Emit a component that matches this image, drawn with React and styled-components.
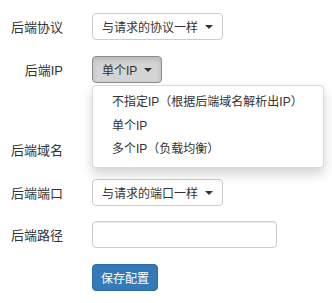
import React from "react";
import styled, { createGlobalStyle } from "styled-components";

const GlobalStyle = createGlobalStyle`
    html, body {
        margin: 0;
        padding: 0;
        background: #ffffff;
    }
    body {
        font-family: "Liberation Sans", "Noto Sans CJK SC", sans-serif;
        color: #333333;
    }
`

const FONT = `"Liberation Sans", "Noto Sans CJK SC", sans-serif`;

export default function App() {
    return (
        <>
            <GlobalStyle />
            <Form>
                <Row $space={16}>
                    <Label>后端协议</Label>
                    <SelectButton $width={131}>
                        <span>与请求的协议一样</span>
                        <Caret />
                    </SelectButton>
                </Row>

                <Row $space={53}>
                    <Label>后端IP</Label>
                    <Holder>
                        <SelectButton $width={70} $active>
                            <span>单个IP</span>
                            <Caret />
                        </SelectButton>
                        <Menu>
                            <MenuItem>不指定IP（根据后端域名解析出IP）</MenuItem>
                            <MenuItem>单个IP</MenuItem>
                            <MenuItem>多个IP（负载均衡）</MenuItem>
                        </Menu>
                    </Holder>
                </Row>

                <Row $space={16}>
                    <Label>后端域名</Label>
                    <TextInput $width={185} />
                </Row>

                <Row $space={15}>
                    <Label>后端端口</Label>
                    <SelectButton $width={131}>
                        <span>与请求的端口一样</span>
                        <Caret />
                    </SelectButton>
                </Row>

                <Row $space={16}>
                    <Label>后端路径</Label>
                    <TextInput $width={185} />
                </Row>

                <Row $space={0}>
                    <Label />
                    <PrimaryButton>保存配置</PrimaryButton>
                </Row>
            </Form>
        </>
    )
}

const Form = styled.form`
    display: flex;
    flex-direction: column;
    padding-top: 13px;
    font-family: ${FONT};
`

const Row = styled.div`
    display: flex;
    align-items: center;
    height: 27px;
    margin-bottom: ${p => p.$space}px;
`

const Label = styled.label`
    width: 63px;
    flex-shrink: 0;
    text-align: right;
    padding-right: 29px;
    font-size: 13px;
    color: #333333;
    white-space: nowrap;
`

const Holder = styled.div`
    position: relative;
    height: 27px;
`

const SelectButton = styled.button`
    display: flex;
    align-items: center;
    justify-content: space-between;
    width: ${p => p.$width}px;
    height: 27px;
    box-sizing: border-box;
    padding: 0 9px 0 9px;
    font-family: ${FONT};
    font-size: 12px;
    color: #333333;
    background: ${p => (p.$active ? "#d4d4d4" : "#ffffff")};
    border: 1px solid ${p => (p.$active ? "#8c8c8c" : "#cccccc")};
    border-radius: 4px;
    box-shadow: ${p => (p.$active ? "inset 0 3px 5px rgba(0,0,0,0.125)" : "none")};
    white-space: nowrap;
    overflow: hidden;
    cursor: pointer;
`

const Caret = styled.span`
    display: inline-block;
    flex-shrink: 0;
    width: 0;
    height: 0;
    margin-left: 6px;
    border-top: 4px solid #333333;
    border-left: 4px solid transparent;
    border-right: 4px solid transparent;
`

const Menu = styled.ul`
    position: absolute;
    top: 29px;
    left: 0;
    z-index: 10;
    width: 232px;
    box-sizing: border-box;
    margin: 0;
    padding: 5px 0;
    list-style: none;
    background: #ffffff;
    border: 1px solid rgba(0, 0, 0, 0.15);
    border-radius: 4px;
    box-shadow: 0 6px 12px rgba(0, 0, 0, 0.175);
`

const MenuItem = styled.li`
    padding: 0 0 0 19px;
    height: 23.5px;
    line-height: 23.5px;
    font-size: 12px;
    color: #333333;
    white-space: nowrap;
`

const TextInput = styled.input`
    width: ${p => p.$width}px;
    height: 27px;
    box-sizing: border-box;
    padding: 0 8px;
    font-family: ${FONT};
    font-size: 12px;
    border: 1px solid #cccccc;
    border-radius: 4px;
    box-shadow: inset 0 1px 1px rgba(0, 0, 0, 0.075);
    outline: none;
`

const PrimaryButton = styled.button`
    height: 27px;
    box-sizing: border-box;
    padding: 0 8px;
    font-family: ${FONT};
    font-size: 12px;
    color: #ffffff;
    background: #337ab7;
    border: 1px solid #2e6da4;
    border-radius: 4px;
    cursor: pointer;
`
